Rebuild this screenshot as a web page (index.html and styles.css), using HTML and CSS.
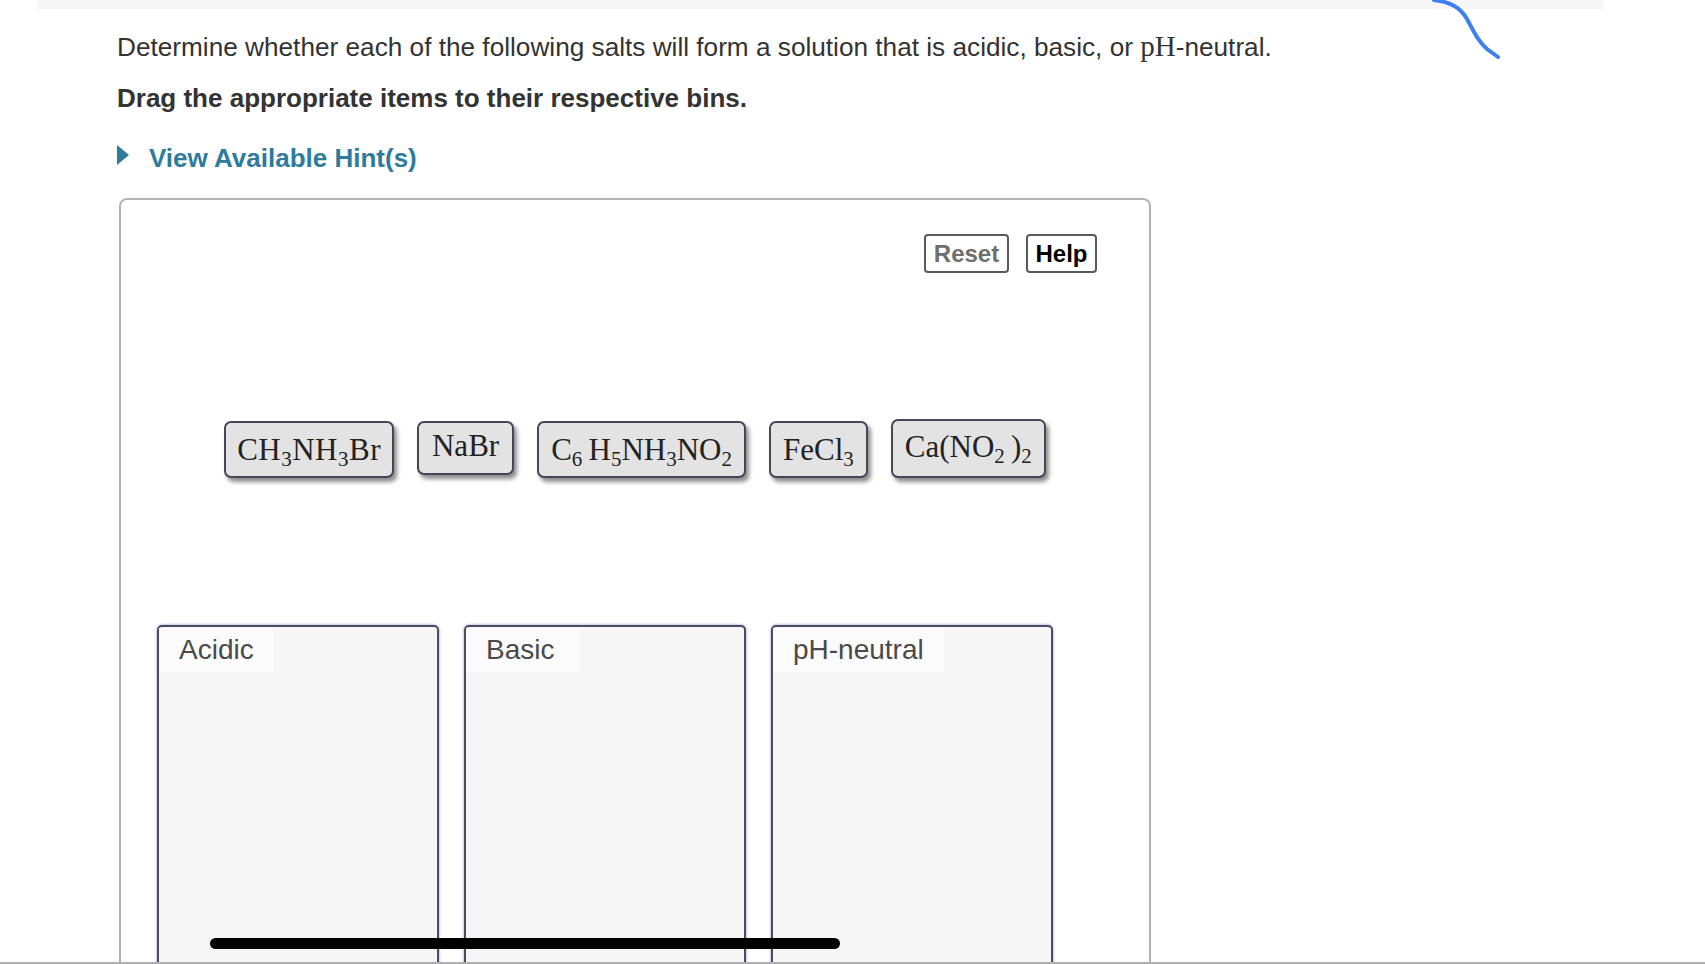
FILE: index.html
```html
<!DOCTYPE html>
<html>
<head>
<meta charset="utf-8">
<link rel="stylesheet" href="styles.css">
</head>
<body>
<div class="topbar"></div>
<main class="content">
  <p class="prompt">Determine whether each of the following salts will form a solution that is acidic, basic, or <span class="math">pH</span>-neutral.</p>
  <p class="instr">Drag the appropriate items to their respective bins.</p>
  <div class="hint"><span class="tri"></span><span class="hint-text">View Available Hint(s)</span></div>
  <section class="panel">
    <div class="tools">
      <button class="btn reset">Reset</button>
      <button class="btn help">Help</button>
    </div>
    <div class="tiles">
      <div class="tile wide">CH<sub>3</sub>NH<sub>3</sub>Br</div>
      <div class="tile short">NaBr</div>
      <div class="tile">C<sub>6</sub>&#8201;H<sub>5</sub>NH<sub>3</sub>NO<sub>2</sub></div>
      <div class="tile">FeCl<sub>3</sub></div>
      <div class="tile raised">Ca(NO<sub>2</sub>&#8201;)<sub>2</sub></div>
    </div>
    <div class="bins">
      <div class="bin"><div class="bin-label">Acidic</div></div>
      <div class="bin"><div class="bin-label">Basic</div></div>
      <div class="bin"><div class="bin-label">pH-neutral</div></div>
    </div>
  </section>
</main>
<svg class="pen" width="120" height="70" viewBox="0 0 120 70">
  <path d="M2 1 C18 3 28 8 35 20 C42 33 46 42 55 50 L66 58" fill="none" stroke="#3d7ff0" stroke-width="4" stroke-linecap="round"/>
</svg>
<div class="scrollbar"></div>
<div class="bottomline"></div>
</body>
</html>
```
FILE: styles.css
```css
html, body {
  margin: 0;
  padding: 0;
  height: 964px;
  overflow: hidden;
  background: #ffffff;
}
body {
  font-family: "Liberation Sans", Arial, sans-serif;
  color: #333333;
  position: relative;
}
.topbar {
  margin-left: 37px;
  width: 1567px;
  height: 9px;
  background: #f6f6f6;
}
.content {
  padding-left: 117px;
}
.prompt {
  margin: 22px 0 0 0;
  font-size: 26.2px;
  line-height: 30px;
  color: #333333;
}
.math {
  font-family: "Liberation Serif", "Times New Roman", serif;
  font-size: 29px;
}
.instr {
  margin: 21px 0 0 0;
  font-size: 26px;
  line-height: 30px;
  font-weight: bold;
  color: #333333;
}
.hint {
  margin-top: 30px;
  display: flex;
  align-items: center;
  height: 30px;
}
.tri {
  width: 0;
  height: 0;
  border-top: 10px solid transparent;
  border-bottom: 10px solid transparent;
  border-left: 12px solid #2f7b9c;
  margin-right: 20px;
  margin-top: -6px;
}
.hint-text {
  font-size: 26px;
  font-weight: bold;
  color: #2f7b9c;
}
.panel {
  margin-top: 25px;
  margin-left: 2px;
  width: 1028px;
  height: 900px;
  border: 2px solid #b3b3b3;
  border-radius: 8px;
  box-sizing: content-box;
}
.tools {
  display: flex;
  justify-content: flex-end;
  gap: 17px;
  padding: 34px 52px 0 0;
}
.btn {
  font-family: "Liberation Sans", Arial, sans-serif;
  font-weight: bold;
  font-size: 24px;
  height: 39px;
  padding: 0 6px;
  background: #ffffff;
  border: 2px solid #5a5a5a;
  border-radius: 4px;
}
.btn.reset {
  color: #6f6f6f;
  width: 85px;
}
.btn.help {
  color: #000000;
  width: 71px;
}
.tiles {
  display: flex;
  justify-content: center;
  align-items: flex-start;
  gap: 23px;
  margin-top: 148px;
}
.tile {
  font-family: "Liberation Serif", "Times New Roman", serif;
  font-size: 31px;
  color: #222222;
  height: 57px;
  line-height: 53px;
  padding: 0 12px;
  background: #e3e3e3;
  border: 2px solid #46465a;
  border-radius: 7px;
  box-shadow: 3px 4px 4px rgba(0, 0, 0, 0.45);
  box-sizing: border-box;
  white-space: nowrap;
}
.tile.wide {
  letter-spacing: 0.5px;
  padding: 0 11px;
}
.tile.short {
  height: 54px;
  line-height: 46px;
  padding: 0 13px;
}
.tile.raised {
  margin-top: -2px;
  height: 59px;
  line-height: 51px;
}
.tile sub {
  font-size: 21px;
  vertical-align: -6px;
  line-height: 0;
}
.bins {
  display: flex;
  gap: 25px;
  padding-left: 36px;
  margin-top: 147px;
}
.bin {
  width: 282px;
  height: 420px;
  background: #f6f6f6;
  border: 2px solid #4c4c5e;
  border-radius: 5px;
  box-shadow: 0 0 2px 1px #c9c9ee;
  box-sizing: border-box;
}
.bin-label {
  display: inline-block;
  background: #fbfbfb;
  font-size: 28px;
  color: #4a4a4a;
  line-height: 44px;
  margin-top: 1px;
  padding: 0 20px 0 20px;
  min-width: 75px;
}
.pen {
  position: absolute;
  left: 1432px;
  top: -1px;
}
.scrollbar {
  position: absolute;
  left: 210px;
  top: 938px;
  width: 630px;
  height: 11px;
  border-radius: 6px;
  background: #000000;
}
.bottomline {
  position: absolute;
  left: 0;
  top: 962px;
  width: 1705px;
  height: 2px;
  background: #b0b0b0;
}
```
